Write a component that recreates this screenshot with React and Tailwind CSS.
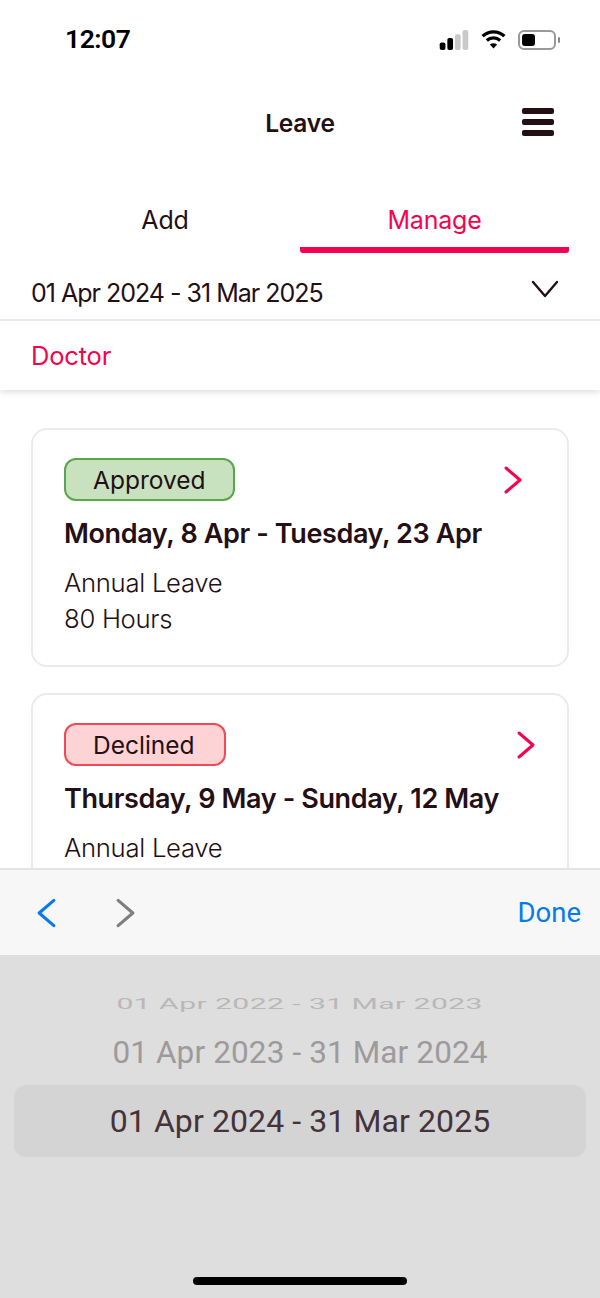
import React from 'react';

const Chevron = ({ dir = 'right', className }) => (
  <svg viewBox="0 0 20 30" fill="none" stroke="currentColor" strokeWidth="3" strokeLinecap="round" strokeLinejoin="round" className={className}>
    <path d={dir === 'right' ? 'M3 3 L17 15 L3 27' : 'M17 3 L3 15 L17 27'} />
  </svg>
);

function StatusBar() {
  return (
    <div className="h-[80px] flex items-center justify-between pl-[65px] pr-[40px] text-black">
      <span className="text-[26.5px] font-semibold leading-none tracking-[-0.5px] -mt-[1px] font-['Roboto',sans-serif]">12:07</span>
      <div className="flex items-center gap-[11px] -mt-[1px]">
        {/* signal */}
        <svg width="30" height="20" viewBox="0 0 30 21">
          <rect x="0" y="13" width="6" height="8" rx="2" fill="#000" />
          <rect x="8" y="8.5" width="6" height="12.5" rx="2" fill="#000" />
          <rect x="16" y="4.5" width="6" height="16.5" rx="2" fill="#c9c9c9" />
          <rect x="24" y="0" width="6" height="21" rx="2" fill="#c9c9c9" />
        </svg>
        {/* wifi */}
        <svg width="27" height="19" viewBox="0 0 26 20" fill="none" stroke="#000" strokeWidth="3.4">
          <path d="M1.5 6.5 C8 0.5 18 0.5 24.5 6.5" />
          <path d="M6 11 C10 7.5 16 7.5 20 11" />
          <path d="M13 19.5 L9.2 15.2 C11.5 13.4 14.5 13.4 16.8 15.2 Z" fill="#000" stroke="none" />
        </svg>
        {/* battery */}
        <div className="flex items-center gap-[2px]">
          <div className="w-[38px] h-[20px] rounded-[6px] border-2 border-[#999999] p-[2px] flex">
            <div className="w-[13px] bg-black rounded-[3px]" />
          </div>
          <div className="w-[2px] h-[6px] bg-[#8a8a8a] rounded-full" />
        </div>
      </div>
    </div>
  );
}

function LeaveCard({ status, statusClass, dateText, chevronClass, lines }) {
  return (
    <div className="mx-[31px] rounded-[16px] border-2 border-[#ebebeb] bg-white pt-[28px] pl-[31px] pr-[32px] pb-[28px] shrink-0">
      <div className="flex items-center justify-between">
        <span className={`h-[43px] flex items-center pt-[2px] pl-[27px] rounded-[12px] border-2 text-[24.5px] leading-none text-[#230f14] ${statusClass}`}>
          {status}
        </span>
        <Chevron className={`w-[22px] h-[30px] text-[#f5034f] ${chevronClass}`} />
      </div>
      <div className="mt-[15px] text-[27px] leading-[36px] font-semibold text-[#230f14] tracking-[-0.38px] whitespace-nowrap">{dateText}</div>
      <div className="mt-[13px] text-[25.7px] leading-[36px] font-light text-[#230f14] tracking-[-0.3px]">
        {lines.map((l) => (
          <div key={l}>{l}</div>
        ))}
      </div>
    </div>
  );
}

export default function App() {
  return (
    <div className="w-[600px] h-[1298px] flex flex-col overflow-hidden bg-white font-['Inter',sans-serif] text-[#230f14]">
      {/* Header */}
      <div className="relative z-10 bg-white shadow-[0_2px_6px_rgba(0,0,0,0.14)] shrink-0 h-[390px] flex flex-col">
        <StatusBar />
        <div className="h-[84px] flex items-center justify-center relative">
          <span className="text-[24.5px] font-semibold tracking-[-0.2px] mt-[2px]">Leave</span>
          <div className="absolute left-[522px] top-[28px] w-[32px] flex flex-col gap-[5px]">
            <div className="h-[6px] rounded-[2px] bg-[#230f14]" />
            <div className="h-[6px] rounded-[2px] bg-[#230f14]" />
            <div className="h-[6px] rounded-[2px] bg-[#230f14]" />
          </div>
        </div>
        {/* Tabs */}
        <div className="flex pt-[20px] pr-[31px]">
          <div className="w-[300px] h-[69px] flex justify-center pt-[19px]">
            <span className="text-[25px] leading-[34px] ml-[30px] tracking-[-0.2px]">Add</span>
          </div>
          <div className="w-[269px] h-[69px] flex flex-col items-center border-b-[6px] border-[#f5034f] rounded-b-[3px] pt-[19px]">
            <span className="text-[25px] leading-[34px] text-[#f5034f] tracking-[-0.2px]">Manage</span>
          </div>
        </div>
        {/* Financial year select */}
        <div className="h-[68px] pt-[14px] flex items-center justify-between pl-[31px] pr-[41px] border-b-2 border-[#ebebeb]">
          <span className="text-[25px] leading-none tracking-[-1px] whitespace-nowrap">01 Apr 2024 - 31 Mar 2025</span>
          <svg width="28" height="20" viewBox="0 0 28 20" fill="none" stroke="#230f14" strokeWidth="2.4" strokeLinecap="round" strokeLinejoin="round" className="-mt-[8px]">
            <path d="M2 3 L14 17 L26 3" />
          </svg>
        </div>
        <div className="flex-1 flex items-center pl-[31px]">
          <span className="text-[25.5px] leading-none text-[#f5034f] tracking-[-0.2px]">Doctor</span>
        </div>
      </div>

      {/* Leave list */}
      <div className="h-[478px] shrink-0 overflow-hidden pt-[38px] flex flex-col gap-[26px]">
        <LeaveCard
          status="Approved"
          statusClass="w-[171px] bg-[#c8e2c0] border-[#5aa64d]"
          dateText="Monday, 8 Apr - Tuesday, 23 Apr"
          chevronClass="mr-[11px]"
          lines={['Annual Leave', '80 Hours']}
        />
        <LeaveCard
          status="Declined"
          statusClass="w-[162px] bg-[#fdd3d5] border-[#f24a55]"
          dateText="Thursday, 9 May - Sunday, 12 May"
          chevronClass="-mr-[2px]"
          lines={['Annual Leave']}
        />
      </div>

      {/* Keyboard accessory */}
      <div className="h-[87px] shrink-0 bg-[#f7f7f7] border-t-2 border-[#e4e4e4] flex items-center justify-between pl-[36px] pr-[19px]">
        <div className="flex items-center gap-[58px]">
          <Chevron dir="left" className="w-[21px] h-[32px] text-[#0a7aea]" />
          <Chevron className="w-[21px] h-[32px] text-[#7f7f7f]" />
        </div>
        <span className="text-[27.5px] leading-none text-[#0a7aea] mt-[1px] font-['Roboto',sans-serif]">Done</span>
      </div>

      {/* Picker */}
      <div className="flex-1 bg-[#dedede] flex flex-col items-center font-['Roboto',sans-serif]">
        <div className="mt-[34px] h-[30px] flex items-center text-[22px] leading-none text-[#b9b8b8] scale-y-[0.68] scale-x-[1.37] tracking-[0.3px] whitespace-nowrap">
          01 Apr 2022 - 31 Mar 2023
        </div>
        <div className="mt-[9px] h-[50px] flex items-center text-[31.5px] leading-none text-[#9d9a9b] tracking-[0.12px] whitespace-nowrap">
          01 Apr 2023 - 31 Mar 2024
        </div>
        <div className="mt-[7px] w-[572px] h-[72px] rounded-[12px] bg-[#d5d4d5] flex items-center justify-center text-[32px] leading-none text-[#443338] tracking-[0.1px] whitespace-nowrap">
          01 Apr 2024 - 31 Mar 2025
        </div>
        <div className="mt-[120px] w-[214px] h-[8px] rounded-full bg-black" />
      </div>
    </div>
  );
}
